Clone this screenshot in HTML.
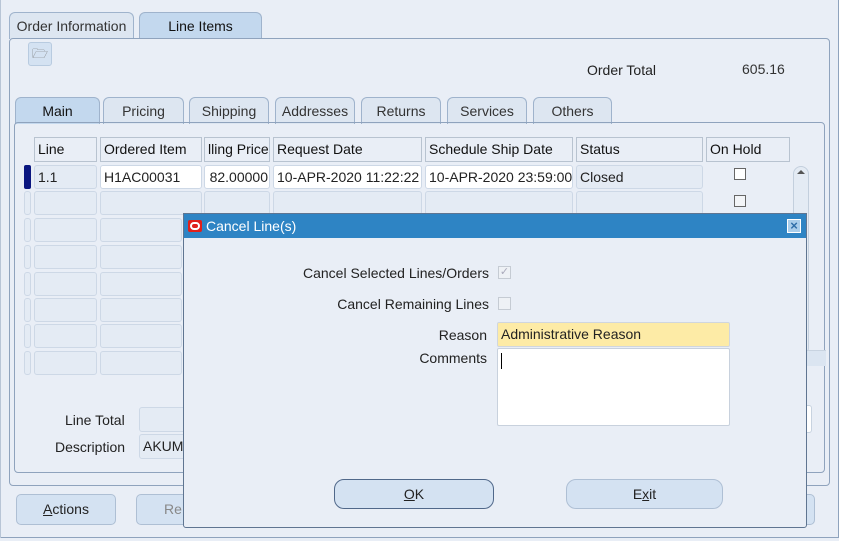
<!DOCTYPE html><html><head><style>
*{box-sizing:border-box;margin:0;padding:0}
body{width:844px;height:541px;background:#e9eef6;font-family:"Liberation Sans",sans-serif;font-size:14px;color:#222;position:relative;overflow:hidden}
.a{position:absolute}
.tab{position:absolute;border:1px solid #9fb3cc;border-bottom:none;border-radius:6px 6px 0 0;background:#dde6f1;text-align:center;color:#333;line-height:26px}
.sel{background:#c3d8ee;color:#111}
.panel{position:absolute;border:1px solid #8fa3bd;border-radius:4px}
.h{position:absolute;border:1px solid #b8c3d0;background:#e9eef6;line-height:22px;padding-left:3px;height:25px;color:#111;white-space:nowrap;overflow:hidden}
.c{position:absolute;border:1px solid #cdd8e6;border-radius:3px;background:#e4ebf4;height:24px;line-height:22px;padding-left:3px;white-space:nowrap;overflow:hidden;color:#222}
.w{background:#fff}
.cb{position:absolute;width:12px;height:12px;border:1px solid #666;background:#fff}
.btn{position:absolute;border:1px solid #aebfd4;border-radius:5px;background:#d4e2f2;text-align:center;line-height:28px;color:#222}
.lbl{position:absolute;text-align:right;white-space:nowrap}
</style></head><body>
<div class="a" style="left:838px;top:0;width:1px;height:538px;background:#8fa3bd"></div>
<div class="a" style="left:839px;top:0;width:5px;height:541px;background:#fff"></div>
<div class="a" style="left:0;top:537px;width:839px;height:1px;background:#8fa3bd"></div>
<div class="a" style="left:0;top:0;width:1px;height:538px;background:#b8c5d6"></div>

<div class="tab" style="left:9px;top:12px;width:125px;height:27px">Order Information</div>
<div class="tab sel" style="left:139px;top:12px;width:123px;height:27px">Line Items</div>
<div class="panel" style="left:9px;top:38px;width:821px;height:448px"></div>
<div class="a" style="left:28px;top:42px;width:24px;height:24px;background:#d4e2f2;border:1px solid #b8cbe0;border-radius:3px;color:#777;font-size:13px;text-align:center;line-height:22px">🗁</div>
<div class="a" style="left:587px;top:62px">Order Total</div>
<div class="a" style="left:742px;top:61px;color:#333">605.16</div>

<div class="tab sel" style="left:15px;top:97px;width:85px">Main</div>
<div class="tab" style="left:103px;top:97px;width:81px">Pricing</div>
<div class="tab" style="left:189px;top:97px;width:80px">Shipping</div>
<div class="tab" style="left:275px;top:97px;width:80px">Addresses</div>
<div class="tab" style="left:361px;top:97px;width:80px">Returns</div>
<div class="tab" style="left:447px;top:97px;width:80px">Services</div>
<div class="tab" style="left:533px;top:97px;width:79px">Others</div>
<div class="panel" style="left:14px;top:122px;width:811px;height:351px"></div>

<div class="h" style="left:34px;top:137px;width:63px">Line</div>
<div class="h" style="left:100px;top:137px;width:102px">Ordered Item</div>
<div class="h" style="left:204px;top:137px;width:66px">lling Price</div>
<div class="h" style="left:273px;top:137px;width:149px">Request Date</div>
<div class="h" style="left:425px;top:137px;width:148px">Schedule Ship Date</div>
<div class="h" style="left:576px;top:137px;width:127px">Status</div>
<div class="h" style="left:706px;top:137px;width:84px">On Hold</div>

<div class="a" style="left:24px;top:165px;width:7px;height:24px;background:#0a1680;border-radius:2px"></div>
<div class="c" style="left:34px;top:165px;width:63px">1.1</div>
<div class="c w" style="left:100px;top:165px;width:102px">H1AC00031</div>
<div class="c w" style="left:204px;top:165px;width:66px;text-align:right;padding-right:1px">82.00000</div>
<div class="c w" style="left:273px;top:165px;width:149px">10-APR-2020 11:22:22</div>
<div class="c w" style="left:425px;top:165px;width:148px">10-APR-2020 23:59:00</div>
<div class="c" style="left:576px;top:165px;width:127px">Closed</div>
<div class="cb" style="left:734px;top:168px"></div>
<div class="cb" style="left:734px;top:195px;background:#f3f5f8"></div>

<div class="c" style="left:24px;top:191px;width:7px;padding:0"></div><div class="c" style="left:34px;top:191px;width:63px"></div><div class="c" style="left:100px;top:191px;width:102px"></div><div class="c" style="left:204px;top:191px;width:66px"></div><div class="c" style="left:273px;top:191px;width:149px"></div><div class="c" style="left:425px;top:191px;width:148px"></div><div class="c" style="left:576px;top:191px;width:127px"></div>
<div class="c" style="left:24px;top:218px;width:7px;padding:0"></div><div class="c" style="left:34px;top:218px;width:63px"></div><div class="c" style="left:100px;top:218px;width:82px"></div>
<div class="c" style="left:24px;top:245px;width:7px;padding:0"></div><div class="c" style="left:34px;top:245px;width:63px"></div><div class="c" style="left:100px;top:245px;width:82px"></div>
<div class="c" style="left:24px;top:272px;width:7px;padding:0"></div><div class="c" style="left:34px;top:272px;width:63px"></div><div class="c" style="left:100px;top:272px;width:82px"></div>
<div class="c" style="left:24px;top:298px;width:7px;padding:0"></div><div class="c" style="left:34px;top:298px;width:63px"></div><div class="c" style="left:100px;top:298px;width:82px"></div>
<div class="c" style="left:24px;top:324px;width:7px;padding:0"></div><div class="c" style="left:34px;top:324px;width:63px"></div><div class="c" style="left:100px;top:324px;width:82px"></div>
<div class="c" style="left:24px;top:351px;width:7px;padding:0"></div><div class="c" style="left:34px;top:351px;width:63px"></div><div class="c" style="left:100px;top:351px;width:82px"></div>
<div class="a" style="left:793px;top:166px;width:16px;height:190px;border:1px solid #c3cfdd;border-radius:8px;background:#e4ebf4"></div>
<div class="a" style="left:797px;top:170px;width:0;height:0;border-left:4px solid transparent;border-right:4px solid transparent;border-bottom:4px solid #555"></div>
<div class="a" style="left:806px;top:350px;width:20px;height:16px;background:#dbe5f1;border-top:1px solid #c8d3e0"></div>
<div class="a" style="left:806px;top:405px;width:6px;height:28px;border:1px solid #c8d3e0;border-left:none;border-radius:0 3px 3px 0;background:#fff"></div>

<div class="lbl" style="left:65px;top:412px">Line Total</div>
<div class="c" style="left:139px;top:407px;width:60px;height:25px"></div>
<div class="lbl" style="left:55px;top:439px">Description</div>
<div class="c" style="left:139px;top:434px;width:60px;height:25px">AKUM</div>

<div class="btn" style="left:16px;top:494px;width:100px;height:31px"><u>A</u>ctions</div>
<div class="btn" style="left:136px;top:494px;width:60px;height:31px;color:#888;text-align:left;padding-left:27px">Re</div>
<div class="btn" style="left:780px;top:494px;width:35px;height:31px"></div>

<!-- dialog -->
<div class="a" style="left:183px;top:213px;width:624px;height:315px;background:#e9eef6;border:1px solid #5f7591;border-radius:0 0 3px 3px">
 <div class="a" style="left:0;top:0;width:622px;height:24px;background:#2e84c4;color:#fff;line-height:24px;padding-left:22px">Cancel Line(s)</div>
 <div class="a" style="left:4px;top:6px;width:14px;height:12px;background:#e0201b;border-radius:2px"><div class="a" style="left:2px;top:2px;width:10px;height:8px;border:2px solid #fff;border-radius:4px"></div></div>
 <div class="a" style="left:603px;top:5px;width:14px;height:14px;background:#a9cdea;border:1px solid #fff;color:#2e6ea8;font-size:13px;line-height:11px;text-align:center;font-weight:bold">×</div>
</div>
<div class="lbl" style="right:355px;top:265px">Cancel Selected Lines/Orders</div>
<div class="a" style="left:498px;top:266px;width:13px;height:13px;border:1px solid #c5cbd3;background:#eef1f5;color:#aab;font-size:11px;line-height:11px;text-align:center">✓</div>
<div class="lbl" style="right:355px;top:296px">Cancel Remaining Lines</div>
<div class="a" style="left:498px;top:297px;width:13px;height:13px;border:1px solid #c5cbd3;background:#eef1f5"></div>
<div class="lbl" style="right:357px;top:327px">Reason</div>
<div class="a" style="left:497px;top:322px;width:233px;height:25px;background:#fdeba6;border:1px solid #d0d6de;border-radius:2px;line-height:23px;padding-left:3px">Administrative Reason</div>
<div class="lbl" style="right:357px;top:350px">Comments</div>
<div class="a" style="left:497px;top:348px;width:233px;height:78px;background:#fff;border:1px solid #c8d1dd;border-radius:2px"><div class="a" style="left:3px;top:4px;width:1px;height:16px;background:#000"></div></div>
<div class="btn" style="left:334px;top:479px;width:160px;height:30px;border:1px solid #50688a;border-radius:10px"><u>O</u>K</div>
<div class="btn" style="left:566px;top:479px;width:157px;height:30px;border-radius:10px">E<u>x</u>it</div>
</body></html>
